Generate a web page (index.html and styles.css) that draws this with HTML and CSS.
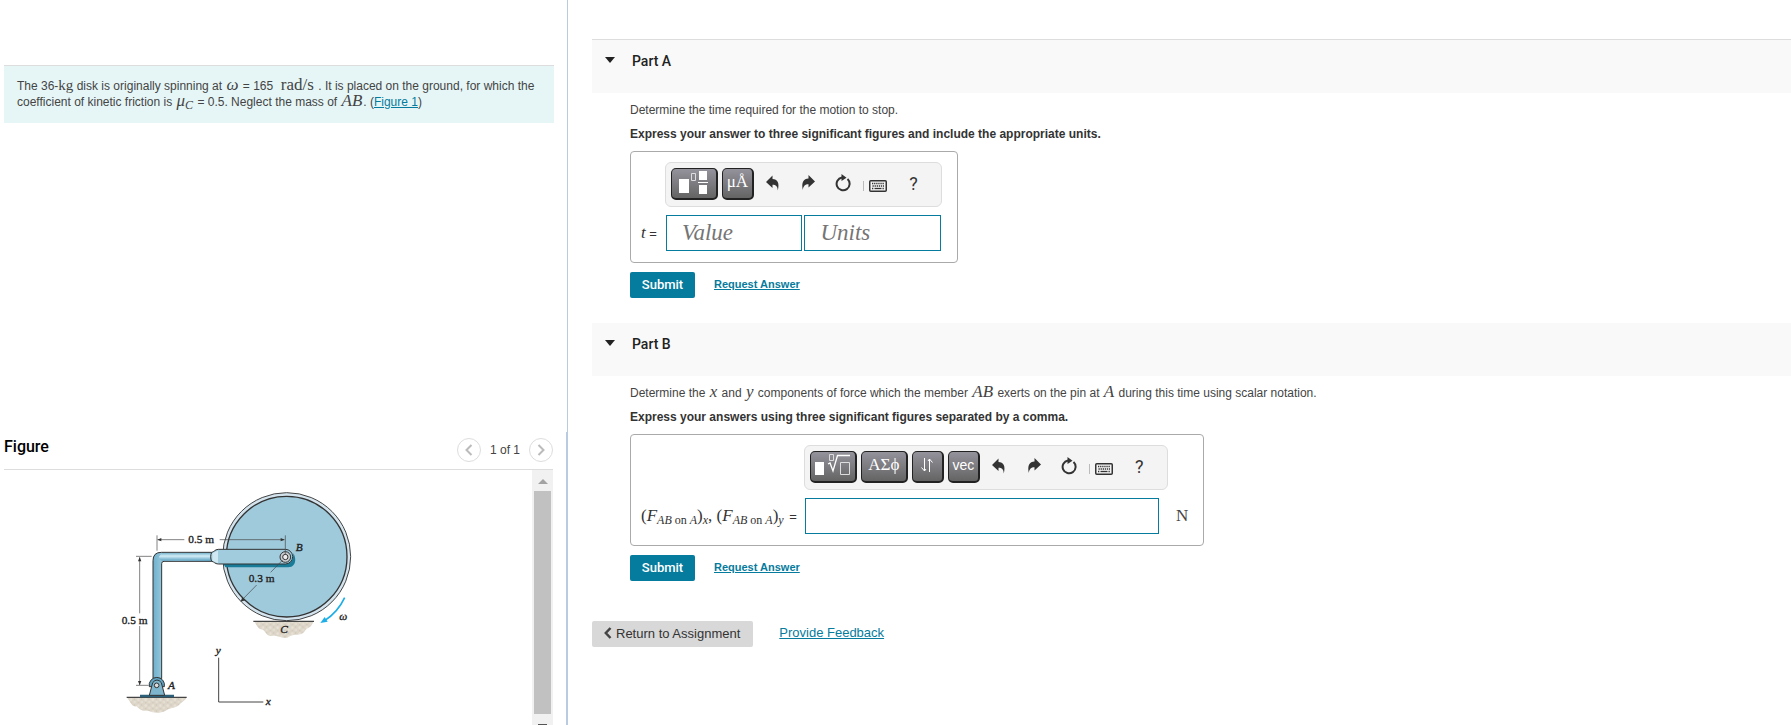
FILE: index.html
```html
<!DOCTYPE html>
<html lang="en">
<head>
<meta charset="utf-8">
<title>Part A and Part B</title>
<link rel="stylesheet" href="styles.css">
</head>
<body>
<svg class="defs" width="0" height="0" aria-hidden="true">
  <symbol id="undo" viewBox="0 0 14 16"><path d="M0 7 6.500 .5V4C11.500 4.200 13.800 8 11.800 15.500 11.600 11.500 10 9.800 6.500 9.800V13Z"/></symbol>
  <symbol id="redo" viewBox="0 0 14 16"><path d="M14 6.500 7.500 0V3.500C2.500 3.700 .2 7.500 1.800 15 2.400 11 4 9.300 7.500 9.300V12.500Z"/></symbol>
  <symbol id="reset" viewBox="0 0 18 18"><path d="M8 3.400A6.500 6.500 0 1 0 13.500 5" fill="none" stroke="currentColor" stroke-width="2"/><path d="M7.500 0 12.500 3.800 7.500 7Z"/></symbol>
  <symbol id="keys" viewBox="0 0 18 12"><rect x=".75" y=".75" width="16.500" height="10.500" rx="1" fill="none" stroke="currentColor" stroke-width="1.500"/><path d="M3 3.500H15M3.500 6H15M3 8.500H4.500M13.500 8.500H15" stroke="currentColor" stroke-width="1.300" stroke-dasharray="1.300 .8"/><path d="M5.500 8.500H12.500" stroke="currentColor" stroke-width="1.300"/></symbol>
</svg>
<div class="page">
  <aside class="side">
    <section class="intro">
      <p class="problem">The 36-<span class="m unit-kg">kg</span> disk is originally spinning at <i class="m">ω</i> = 165 &nbsp;<span class="m">rad/s</span> . It is placed on the ground, for which the coefficient of kinetic friction is <i class="m">μ<sub>C</sub></i> = 0.5. Neglect the mass of <i class="m">AB</i>. (<a href="#figure">Figure 1</a>)</p>
    </section>
    <section class="figure" id="figure">
      <header class="figure-head">
        <h2>Figure</h2>
        <div class="pager">
          <button class="round" aria-label="Previous figure"><svg width="8" height="12" viewBox="0 0 8 12"><path d="M6.500 1 1.500 6l5 5"/></svg></button>
          <span>1 of 1</span>
          <button class="round" aria-label="Next figure"><svg width="8" height="12" viewBox="0 0 8 12"><path d="M1.500 1l5 5-5 5"/></svg></button>
        </div>
      </header>
      <div class="figure-body">
        <div class="drawing">
          <svg width="270" height="255" viewBox="0 0 810 765" role="img" aria-label="Disk pinned to member AB">
            <defs>
              <linearGradient id="pv" x1="0" x2="1" y1="0" y2="0"><stop offset="0" stop-color="#6fb0cc"/><stop offset=".4" stop-color="#d3edf6"/><stop offset="1" stop-color="#5fa3c2"/></linearGradient>
              <linearGradient id="ph" x1="0" x2="0" y1="0" y2="1"><stop offset="0" stop-color="#7bb7d0"/><stop offset=".4" stop-color="#d3edf6"/><stop offset="1" stop-color="#5fa3c2"/></linearGradient>
              <pattern id="sand" width="22" height="18" patternUnits="userSpaceOnUse"><rect width="22" height="18" fill="#dcd5c8"/><circle cx="5" cy="5" r="4" fill="#e8e2d6"/><circle cx="16" cy="12" r="4" fill="#e5dfd2"/><circle cx="15" cy="3" r="2" fill="#cdc4b5"/><circle cx="5" cy="14" r="2" fill="#cfc6b7"/></pattern>
            </defs>
            <path d="M462 454H640C635 475 620 472 614 484 603 501 580 489 566 501 548 510 533 493 512 498 495 496 497 479 482 478 472 474 470 464 462 454Z" fill="url(#sand)"/>
            <path d="M460 454H642" stroke="#444" stroke-width="4"/>
            <circle cx="560" cy="260" r="192" fill="#d4e4ee" stroke="#444" stroke-width="3"/>
            <circle cx="560" cy="260" r="181" fill="#9fcadb" stroke="#333" stroke-width="4"/>
            <path d="M370 281H562C577 278 580 263 580 250 591 268 586 292 565 292H376Z" fill="#187c98"/>
            <path d="M159 626V272Q159 247 184 247H335V274H192Q185 274 185 281V626Z" fill="url(#pv)" stroke="#333" stroke-width="3"/>
            <path d="M186 249H335V272H190Q178 272 177 260Z" fill="url(#ph)"/>
            <path d="M335 247C342 247 344 238 355 238H556A22 22 0 0 1 556 282H355C344 282 342 274 335 274C331 265 331 256 335 247Z" fill="#a0ccde" stroke="#333" stroke-width="3"/>
            <path d="M337 249 354 242V280L337 272Z" fill="#cfe8f2"/>
            <circle cx="556" cy="261" r="16" fill="#c9cdd0" stroke="#333" stroke-width="3"/>
            <circle cx="556" cy="261" r="8" fill="#eee" stroke="#333" stroke-width="3"/>
            <g stroke="#444" stroke-width="2" fill="none">
              <path d="M171 196V242M556 196V255M173 209H253M359 209H553M108 259H155M119 262V430M119 468V645M108 646H146M548 270 512 307M470 345 424 392"/>
              <path d="M356 563V696H490" stroke-width="3"/>
            </g>
            <g fill="#333">
              <path d="M172 209 184 204V214ZM554 209 542 204V214ZM119 261 114 274H124ZM119 646 114 633H124ZM422 395 427 381 436 391Z"/>
            </g>
            <path d="M734 383Q713 427 675 451" fill="none" stroke="#1daee5" stroke-width="5"/><path d="M661 459 674 441 683 455Z" fill="#1daee5"/>
            <path d="M82 683H260C252 694 243 697 238 704 224 716 209 712 197 722 177 732 160 728 144 722 124 724 119 718 110 709 95 711 93 698 82 683Z" fill="url(#sand)"/>
            <path d="M80 682H260" stroke="#444" stroke-width="4"/><path d="M120 678H222" stroke="#2c6078" stroke-width="7"/>
            <path d="M148 650A23 23 0 1 1 193 650Z" fill="#5fa3c2" stroke="#333" stroke-width="3"/>
            <path d="M148 676 158 638Q171 622 184 638L194 676Z" fill="#7db5cc" stroke="#333" stroke-width="3"/>
            <circle cx="170" cy="646" r="7" fill="#ddd" stroke="#333" stroke-width="3"/>
            <g class="fig-text">
              <text x="265" y="219">0.5 m</text><text x="446" y="336">0.3 m</text><text x="65" y="461">0.5 m</text>
              <g font-style="italic"><text x="587" y="243">B</text><text x="541" y="490">C</text><text x="204" y="657">A</text><text x="347" y="551">y</text><text x="497" y="704">x</text><text x="718" y="450">ω</text></g>
            </g>
          </svg>
        </div>
        <div class="track" aria-hidden="true"><span class="up"></span><span class="thumb"></span><span class="down"></span></div>
      </div>
    </section>
  </aside>

  <main class="main">
    <section>
      <header class="part-head first"><span class="caret"></span><h3>Part A</h3></header>
      <div class="part-body">
        <p>Determine the time required for the motion to stop.</p>
        <p class="strong">Express your answer to three significant figures and include the appropriate units.</p>
        <div class="answer">
          <div class="toolbar">
            <button class="key big" aria-label="Templates"><svg width="30" height="26" viewBox="0 0 30 26"><path d="M0 10H10V24H0ZM20 2H28V11H20ZM20 16H28V25H20Z" fill="#fff"/><path d="M19 13.500H29" stroke="#fff"/><path d="M12.500 4.500H16.500V11.500H12.500Z" fill="none" stroke="#ddd"/></svg></button>
            <button class="key serif">μÅ</button>
            <div class="tools">
              <button aria-label="Undo"><svg width="14" height="16"><use href="#undo"/></svg></button>
              <button aria-label="Redo"><svg width="14" height="16"><use href="#redo"/></svg></button>
              <button aria-label="Reset"><svg width="18" height="18"><use href="#reset"/></svg></button>
              <button class="kbd" aria-label="Keyboard shortcuts"><svg width="18" height="12"><use href="#keys"/></svg></button>
              <button class="help">?</button>
            </div>
          </div>
          <label class="eq" for="value"><i>t</i> =</label>
          <div class="fields"><input id="value" placeholder="Value"><input aria-label="Units" placeholder="Units"></div>
        </div>
        <div class="actions"><button class="submit">Submit</button><a href="#a">Request Answer</a></div>
      </div>
    </section>
    <section>
      <header class="part-head"><span class="caret"></span><h3>Part B</h3></header>
      <div class="part-body">
        <p>Determine the <i class="m">x</i> and <i class="m">y</i> components of force which the member <i class="m">AB</i> exerts on the pin at <i class="m">A</i> during this time using scalar notation.</p>
        <p class="strong">Express your answers using three significant figures separated by a comma.</p>
        <div class="answer with-unit">
          <div class="toolbar">
            <button class="key big" aria-label="Math templates"><svg width="36" height="24" viewBox="0 0 36 24"><path d="M0 9H9V22H0Z" fill="#fff"/><path d="M13 11 15 10 18 18 22.500 2.500H35" fill="none" stroke="#fff" stroke-width="1.300"/><path d="M14.500 1.500H18.500V7.500H14.500ZM25.500 9.500H34.500V21.500H25.500Z" fill="none" stroke="#ddd"/></svg></button>
            <button class="key big serif">ΑΣϕ</button>
            <button class="key" aria-label="Arrows"><svg width="12" height="14" viewBox="0 0 12 14" fill="none" stroke="#fff"><path d="M3.500 0V13L.5 9.500M8.500 14V1L11.500 4.500M3.500 13 5 11M8.500 1 7 3"/></svg></button>
            <button class="key">vec</button>
            <div class="tools">
              <button aria-label="Undo"><svg width="14" height="16"><use href="#undo"/></svg></button>
              <button aria-label="Redo"><svg width="14" height="16"><use href="#redo"/></svg></button>
              <button aria-label="Reset"><svg width="18" height="18"><use href="#reset"/></svg></button>
              <button class="kbd" aria-label="Keyboard shortcuts"><svg width="18" height="12"><use href="#keys"/></svg></button>
              <button class="help">?</button>
            </div>
          </div>
          <label class="eq formula" for="force"><span>(<i>F</i><sub><i>AB</i> on <i>A</i></sub>)<sub><i>x</i></sub>, (<i>F</i><sub><i>AB</i> on <i>A</i></sub>)<sub><i>y</i></sub></span> =</label>
          <div class="fields single"><input id="force"></div>
          <span class="unit">N</span>
        </div>
        <div class="actions"><button class="submit">Submit</button><a href="#b">Request Answer</a></div>
      </div>
    </section>
    <footer class="foot">
      <button class="return"><svg width="8" height="12" viewBox="0 0 8 12"><path d="M6.500 1 1.800 6l4.700 5" fill="none" stroke="#444" stroke-width="2.500"/></svg>Return to Assignment</button>
      <a href="#feedback">Provide Feedback</a>
    </footer>
  </main>
</div>
</body>
</html>
```
FILE: styles.css
```css
* { box-sizing: border-box; }
body { margin: 0; font: 12px/16px "Liberation Sans", Arial, sans-serif; color: #444; background: #fff; overflow: hidden; }
h2, h3, p { margin: 0; }
a { color: #057b9d; }
button { font-family: inherit; padding: 0; cursor: pointer; }
.defs { display: block; }
.page { display: flex; height: 100vh; }
.m { font-family: "Liberation Serif", serif; font-size: 17px; line-height: 0; padding: 0 1px; }
.m sub, .formula sub { font-size: 12px; line-height: 0; vertical-align: -3px; }
.unit-kg { font-size: 15px; padding: 0; }

.side { flex: 0 0 568px; display: flex; flex-direction: column; }
.intro { flex: 0 0 59.6%; border-right: 1px solid #b9cbe0; padding: 65px 13px 0 4px; }
.problem { background: #e6f6f7; border-top: 1px solid #ddd; padding: 12px 13px 13px; }
.figure { flex: 1; min-height: 0; display: flex; flex-direction: column; border-right: 2px solid #b9cbe0; padding: 0 13px 0 4px; }
.figure-head { flex: none; display: flex; justify-content: space-between; align-items: center; height: 38px; border-bottom: 1px solid #ddd; }
.figure-head h2 { font: 500 16px/20px Roboto, sans-serif; color: #000; padding-bottom: 8px; }
.pager { display: flex; align-items: center; gap: 9px; padding-bottom: 2px; }
.round { width: 24px; height: 24px; border: 1px solid #ddd; border-radius: 50%; background: #fff; display: grid; place-items: center; }
.round path { fill: none; stroke: #bbb; stroke-width: 2; }
.figure-body { flex: 1; min-height: 0; display: flex; overflow: hidden; }
.drawing { flex: 1; display: flex; padding-left: 96px; }
.fig-text { font: 34px "Liberation Serif", serif; fill: #222; stroke: #222; stroke-width: 1px; }
.track { flex: 0 0 21px; display: flex; flex-direction: column; align-items: center; background: #f1f1f1; padding-top: 9px; gap: 7px; }
.up { border: 5px solid transparent; border-top: 0; border-bottom-color: #a3a3a3; }
.thumb { flex: 1; width: 17px; background: #c1c1c1; }
.down { height: 4px; width: 9px; border-bottom: 1px solid #555; }

.main { flex: 1; min-width: 0; padding: 39px 0 0 24px; }
.part-head { display: flex; align-items: flex-start; gap: 17px; background: #f9f9f9; padding: 11px 13px 22px; color: #222; }
.part-head.first { border-top: 1px solid #ddd; }
.part-head h3 { font: 500 14px/20px Roboto, sans-serif; }
.caret { border: 5px solid transparent; border-top: 6px solid #222; border-bottom: 0; margin-top: 6px; }
.part-body { padding: 9px 10px 25px 38px; }
.part-body p { line-height: 16px; padding: 0 0 8px; }
.part-body .strong { font-weight: bold; color: #333; padding: 0 0 9px; }
.answer { display: inline-grid; grid-template-columns: auto auto; row-gap: 8px; border: 1px solid #aaa; border-radius: 4px; padding: 10px 15px 11px 10px; vertical-align: top; }
.answer.with-unit { grid-template-columns: auto auto auto; }
.toolbar { grid-column: 2; display: flex; gap: 4px; background: #f4f4f4; border: 1px solid #ddd; border-radius: 6px; padding: 5px 10px 6px 5px; }
.key { width: 32px; height: 32px; border: 1px solid #222; border-width: 1px 2px 2px 1px; border-radius: 5px; background: linear-gradient(#94929b, #646464); color: #fff; font-size: 14px; display: grid; place-items: center; padding-bottom: 3px; }
.big { width: 47px; }
.serif { font: 17px "Liberation Serif", serif; }
.tools { display: flex; margin-left: -2px; }
.tools button { width: 35px; border: 0; background: none; color: #333; display: grid; place-items: center; padding-bottom: 2px; }
.tools svg { fill: currentColor; }
.tools .kbd { grid-template-columns: 1px auto; gap: 5px; justify-content: center; padding: 4px 6px 0 0; }
.kbd::before { content: ""; width: 1px; height: 10px; background: #bbb; }
.tools .help { font: 18px Roboto, sans-serif; }
.eq { grid-column: 1; align-self: center; padding-right: 8px; font-size: 13px; color: #333; white-space: nowrap; }
.eq > i { font: italic 17px "Liberation Serif", serif; }
.formula { padding-right: 7px; }
.formula span { font: 17px/20px "Liberation Serif", serif; padding-right: 2px; }
.fields { display: grid; grid-template-columns: 1fr 1fr; gap: 2px; padding: 0 1px; }
.fields.single { grid-template-columns: 1fr; padding-right: 9px; }
.fields input { min-width: 100%; width: 0; height: 36px; border: 1px solid #057b9d; padding: 0 15px; font: italic 23px "Liberation Serif", serif; color: #333; }
.fields input::placeholder { color: #757575; }
.unit { align-self: center; font: 17px "Liberation Serif", serif; padding: 0 0 0 8px; width: 20px; }
.actions { display: flex; align-items: center; gap: 19px; padding-top: 9px; font: bold 11px/16px "Liberation Sans", Arial, sans-serif; }
.actions a { padding-bottom: 2px; }
.submit { width: 65px; height: 26px; border: 0; border-radius: 2px; background: #057b9d; color: #fff; font: 500 13px Roboto, sans-serif; padding-bottom: 2px; }
.foot { display: flex; align-items: center; gap: 26px; padding-top: 15px; font-size: 13px; }
.foot a { padding-bottom: 2px; }
.return { display: flex; align-items: center; gap: 4px; height: 26px; border: 0; border-radius: 2px; background: #d8d8d8; color: #333; font-size: 13px; padding: 0 13px 2px 12px; }
```
